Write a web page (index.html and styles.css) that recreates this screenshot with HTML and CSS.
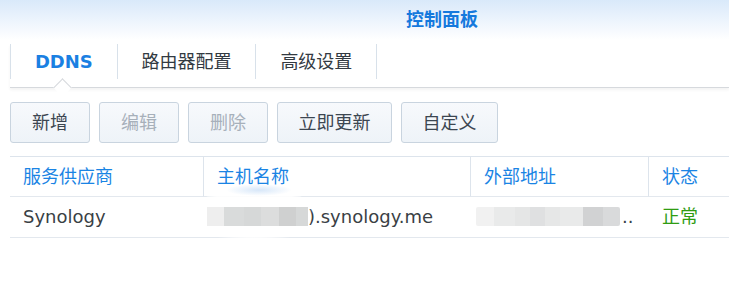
FILE: index.html
```html
<!DOCTYPE html>
<html lang="zh-CN">
<head>
<meta charset="utf-8">
<title>控制面板</title>
<link rel="stylesheet" href="styles.css">
</head>
<body>
<div class="header"><span class="title">控制面板</span></div>
<div class="tabs">
  <div class="tab active">DDNS</div>
  <div class="tab">路由器配置</div>
  <div class="tab">高级设置</div>
  <span class="notch"></span>
</div>
<div class="toolbar">
  <button class="btn">新增</button>
  <button class="btn disabled">编辑</button>
  <button class="btn disabled">删除</button>
  <button class="btn">立即更新</button>
  <button class="btn">自定义</button>
</div>
<div class="grid">
  <span class="smudge"></span>
  <div class="th">服务供应商</div>
  <div class="th">主机名称</div>
  <div class="th">外部地址</div>
  <div class="th last">状态</div>
  <div class="td">Synology</div>
  <div class="td"><span class="mosaic m1"></span>).synology.me</div>
  <div class="td"><span class="mosaic m2"></span>..</div>
  <div class="td ok">正常</div>
</div>
</body>
</html>
```
FILE: styles.css
```css
html, body {
  margin: 0;
  padding: 0;
  background: #fff;
}
body {
  font-family: "DejaVu Sans", "Noto Sans CJK SC", sans-serif;
  font-size: 18px;
  color: #3c4651;
  width: 729px;
  height: 287px;
  overflow: hidden;
}
.header {
  height: 40px;
  background: linear-gradient(#d9e9fa, #eef5fd 55%, #ffffff);
  padding-left: 406px;
}
.title {
  display: block;
  line-height: 40px;
  font-weight: bold;
  color: #1579dd;
}
.tabs {
  position: relative;
  display: flex;
  align-items: flex-start;
  margin: 4px 0 0 10px;
  height: 43px;
  border-bottom: 1px solid #d6d9dd;
  box-shadow: 0 2px 3px rgba(0, 0, 0, 0.05);
}
.tab {
  height: 35px;
  line-height: 35px;
  padding: 0 23.9px;
  border-right: 1px solid #d8e1ea;
  color: #333a42;
}
.tab:first-child {
  border-left: 1px solid #d8e1ea;
}
.tab.active {
  color: #1a80e2;
  font-weight: bold;
}
.notch {
  position: absolute;
  left: 46px;
  top: 37px;
  width: 12px;
  height: 12px;
  background: #fff;
  border-top: 1px solid #d6d9dd;
  border-left: 1px solid #d6d9dd;
  transform: rotate(45deg);
}
.toolbar {
  display: flex;
  gap: 9px;
  margin: 14px 0 0 10px;
}
.btn {
  font: inherit;
  height: 41px;
  min-width: 80px;
  padding: 0 20.5px;
  border: 1px solid #c9d4df;
  border-radius: 3px;
  background: linear-gradient(#f7f9fc, #eef3f8);
  color: #3c4651;
  line-height: 39px;
}
.btn.disabled {
  color: #a7b0ba;
}
.grid {
  position: relative;
  display: grid;
  grid-template-columns: 194px 267px 178px 1fr;
  margin: 13px 0 0 10px;
  border-top: 1px solid #dde4ec;
}
.th {
  height: 39px;
  line-height: 39px;
  padding-left: 13px;
  color: #1a84e4;
  border-right: 1px solid #dde4ec;
  border-bottom: 1px solid #e3e8ee;
}
.th.last {
  border-right: none;
}
.td {
  position: relative;
  height: 40px;
  line-height: 40px;
  padding-left: 13px;
  color: #3a3f45;
  border-bottom: 1px solid #e3e8ee;
  white-space: nowrap;
  overflow: hidden;
}
.td.ok {
  color: #2f9c12;
}
.mosaic {
  display: inline-block;
  height: 19px;
  vertical-align: -3px;
}
.m1 {
  width: 101px;
  margin-left: -10px;
  background: linear-gradient(90deg,
    #eeeeee 0 17px, #d9dbdb 17px 37px, #d6d8d8 37px 54px,
    #dcdddd 54px 72px, #cfd0d0 72px 89px, #d6d8d8 89px 101px);
}
.m2 {
  width: 144px;
  margin-left: -8px;
  margin-right: 2px;
  background: linear-gradient(90deg,
    #f1f1f1 0 18px, #e9eaea 18px 39px, #e5e6e6 39px 54px,
    #dfe0e1 54px 69px, #e6e7e7 69px 84px, #e9eaea 84px 107px,
    #d1d2d3 107px 127px, #d9dadb 127px 144px);
  border-radius: 2px;
}
.smudge {
  position: absolute;
  left: 186px;
  top: 27px;
  width: 116px;
  height: 60px;
  border-radius: 50%;
  background: radial-gradient(ellipse at 50% 45%, rgba(255,255,255,0.9) 55%, rgba(255,255,255,0) 72%);
  pointer-events: none;
  z-index: 1;
}
.smudge::before {
  content: "";
  position: absolute;
  left: 30px;
  top: 0;
  width: 66px;
  height: 12px;
  border-radius: 50%;
  background: radial-gradient(ellipse, rgba(210,228,248,0.9), rgba(210,228,248,0) 70%);
}
.td .mosaic {
  position: relative;
  z-index: 2;
}
```
